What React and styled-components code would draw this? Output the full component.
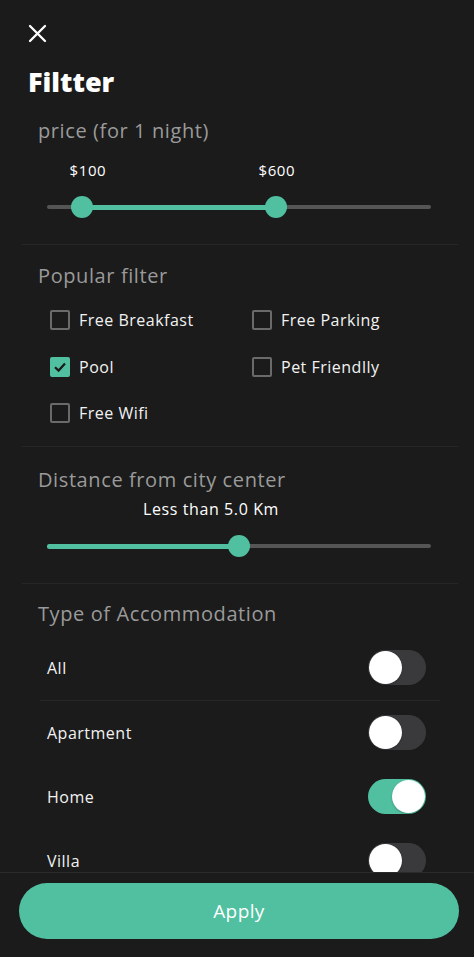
import React, { useState } from "react"
import styled, { createGlobalStyle } from "styled-components"

const TEAL = "#50c0a0"

const GlobalStyle = createGlobalStyle`
  html, body {
    margin: 0;
    padding: 0;
    background: #1b1b1b;
  }
  body {
    font-family: "Open Sans", "Noto Sans", sans-serif;
    color: #f2f2f2;
  }
  * {
    box-sizing: border-box;
  }
`

const FILTERS = [
  { label: "Free Breakfast", checked: false },
  { label: "Free Parking", checked: false },
  { label: "Pool", checked: true },
  { label: "Pet Friendlly", checked: false },
  { label: "Free Wifi", checked: false },
]

const TYPES = [
  { label: "All", on: false, divider: true },
  { label: "Apartment", on: false },
  { label: "Home", on: true },
  { label: "Villa", on: false },
]

const pct = (v, min, max) => ((v - min) / (max - min)) * 100

const CloseIcon = () => (
  <svg width="19" height="19" viewBox="0 0 19 19">
    <path d="M2 2 L17 17 M17 2 L2 17" stroke="#fff" strokeWidth="2.3" strokeLinecap="round" />
  </svg>
)

const CheckIcon = () => (
  <svg width="14" height="14" viewBox="0 0 14 14">
    <path d="M2 7.2 L5.6 10.6 L12 3.6" fill="none" stroke="#1b1b1b" strokeWidth="2.2" />
  </svg>
)

const PriceSlider = ({ min, max, low, high }) => {
  const a = pct(low, min, max)
  const b = pct(high, min, max)
  return (
    <>
      <ValueRow>
        <ValueTag style={{ left: `calc(${a}% + 6px)` }}>${low}</ValueTag>
        <ValueTag style={{ left: `calc(${b}% + 1px)` }}>${high}</ValueTag>
      </ValueRow>
      <SliderBox>
        <Rail />
        <Fill style={{ left: `${a}%`, width: `${b - a}%` }} />
        <Thumb style={{ left: `${a}%` }} />
        <Thumb style={{ left: `${b}%` }} />
      </SliderBox>
    </>
  )
}

const DistanceSlider = ({ max, value }) => {
  const p = pct(value, 0, max)
  return (
    <>
      <DistanceLabel>Less than {value.toFixed(1)} Km</DistanceLabel>
      <SliderBox>
        <Rail />
        <Fill style={{ left: 0, width: `${p}%` }} />
        <Thumb style={{ left: `${p}%` }} />
      </SliderBox>
    </>
  )
}

const App = () => {
  const [filters, setFilters] = useState(FILTERS)
  const [types, setTypes] = useState(TYPES)

  const toggleFilter = i =>
    setFilters(f => f.map((x, j) => (j === i ? { ...x, checked: !x.checked } : x)))
  const toggleType = i =>
    setTypes(t => t.map((x, j) => (j === i ? { ...x, on: !x.on } : x)))

  return (
    <>
      <GlobalStyle />
      <Page>
        <Content>
          <CloseButton aria-label="close">
            <CloseIcon />
          </CloseButton>
          <Title>Filtter</Title>

          <Section>
            <SectionTitle>price (for 1 night)</SectionTitle>
            <PriceSlider min={10} max={1000} low={100} high={600} />
          </Section>

          <Section $bottom={9}>
            <SectionTitle>Popular filter</SectionTitle>
            <CheckGrid>
              {filters.map((f, i) => (
                <CheckItem key={f.label} onClick={() => toggleFilter(i)}>
                  <Box $checked={f.checked}>{f.checked && <CheckIcon />}</Box>
                  {f.label}
                </CheckItem>
              ))}
            </CheckGrid>
          </Section>

          <Section $top={19} $bottom={26}>
            <SectionTitle>Distance from city center</SectionTitle>
            <DistanceSlider max={10} value={5} />
          </Section>

          <Section $top={16} $noBorder>
            <SectionTitle>Type of Accommodation</SectionTitle>
            <TypeList>
              {types.map((t, i) => (
                <TypeRow key={t.label} $divider={t.divider}>
                  <TypeLabel>{t.label}</TypeLabel>
                  <Switch $on={t.on} onClick={() => toggleType(i)}>
                    <Knob />
                  </Switch>
                </TypeRow>
              ))}
            </TypeList>
          </Section>
        </Content>

        <Footer>
          <ApplyButton>Apply</ApplyButton>
        </Footer>
      </Page>
    </>
  )
}

export default App

const Page = styled.div`
  height: 100vh;
  display: flex;
  flex-direction: column;
  background: #1b1b1b;
`

const Content = styled.div`
  flex: 1;
  min-height: 0;
  overflow: hidden;
  padding-top: 24px;
`

const CloseButton = styled.button`
  display: block;
  margin-left: 28px;
  padding: 0;
  width: 19px;
  height: 19px;
  background: none;
  border: 0;
  cursor: pointer;
`

const Title = styled.h1`
  margin: 21px 0 0 28px;
  height: 36px;
  line-height: 36px;
  font-size: 27px;
  font-weight: 800;
  color: #fff;
`

const Section = styled.section`
  margin: 0 16px 0 22px;
  padding: ${p => p.$top || 17}px 0 ${p => p.$bottom || 26}px;
  border-bottom: ${p => (p.$noBorder ? "none" : "1px solid #262626")};
`

const SectionTitle = styled.h2`
  margin: 0 0 0 16px;
  height: 28px;
  line-height: 28px;
  font-size: 20px;
  font-weight: 400;
  letter-spacing: 0.6px;
  color: #9a9a9a;
`

const ValueRow = styled.div`
  position: relative;
  height: 20px;
  margin: 15px 27px 0 25px;
`

const ValueTag = styled.span`
  position: absolute;
  top: 0;
  transform: translateX(-50%);
  line-height: 20px;
  font-size: 15px;
  letter-spacing: 0.6px;
  color: #fff;
  white-space: nowrap;
`

const DistanceLabel = styled.div`
  margin-top: 5px;
  padding-right: 58px;
  height: 20px;
  line-height: 20px;
  text-align: center;
  font-size: 16px;
  letter-spacing: 0.6px;
  color: #fff;
`

const SliderBox = styled.div`
  position: relative;
  height: 22px;
  padding-top: 9px;
  margin: 16px 27px 0 25px;
`

const Rail = styled.div`
  height: 4px;
  border-radius: 2px;
  background: #555;
`

const Fill = styled.div`
  position: absolute;
  top: 9px;
  height: 5px;
  border-radius: 3px;
  background: ${TEAL};
`

const Thumb = styled.div`
  position: absolute;
  top: 0;
  width: 22px;
  height: 22px;
  margin-left: -11px;
  border-radius: 50%;
  background: ${TEAL};
`

const CheckGrid = styled.div`
  display: grid;
  grid-template-columns: 202px 1fr;
  grid-auto-rows: 46.5px;
  margin-top: 7px;
  padding-left: 28px;
`

const CheckItem = styled.label`
  display: flex;
  align-items: center;
  gap: 9px;
  font-size: 16px;
  letter-spacing: 0.5px;
  color: #f2f2f2;
  cursor: pointer;
`

const Box = styled.span`
  display: flex;
  align-items: center;
  justify-content: center;
  width: 20px;
  height: 20px;
  border-radius: 2px;
  border: 2px solid ${p => (p.$checked ? TEAL : "#6a6a6a")};
  background: ${p => (p.$checked ? TEAL : "transparent")};
`

const TypeList = styled.div`
  margin: 8px 18px 0;
`

const TypeRow = styled.div`
  display: flex;
  align-items: center;
  justify-content: space-between;
  height: 64px;
  padding: 0 14px 0 7px;
  border-bottom: ${p => (p.$divider ? "1px solid #262626" : "none")};
  box-sizing: content-box;
`

const TypeLabel = styled.span`
  font-size: 16px;
  letter-spacing: 0.5px;
  color: #f2f2f2;
`

const Switch = styled.button`
  display: flex;
  align-items: center;
  justify-content: ${p => (p.$on ? "flex-end" : "flex-start")};
  width: 58px;
  height: 35px;
  padding: 1px;
  border: 0;
  border-radius: 18px;
  background: ${p => (p.$on ? TEAL : "#3a3a3c")};
  cursor: pointer;
`

const Knob = styled.span`
  width: 33px;
  height: 33px;
  border-radius: 50%;
  background: #fff;
  box-shadow: 0 1px 2px rgba(0, 0, 0, 0.25);
`

const Footer = styled.div`
  flex: none;
  padding: 10px 15px 18px 19px;
  border-top: 1px solid #2a2a2a;
  background: #1b1b1b;
`

const ApplyButton = styled.button`
  display: block;
  width: 100%;
  height: 56px;
  border: 0;
  border-radius: 28px;
  background: ${TEAL};
  color: #fff;
  font-family: "Open Sans", "Noto Sans", sans-serif;
  font-size: 19px;
  font-weight: 400;
  letter-spacing: 0.4px;
  cursor: pointer;
`
